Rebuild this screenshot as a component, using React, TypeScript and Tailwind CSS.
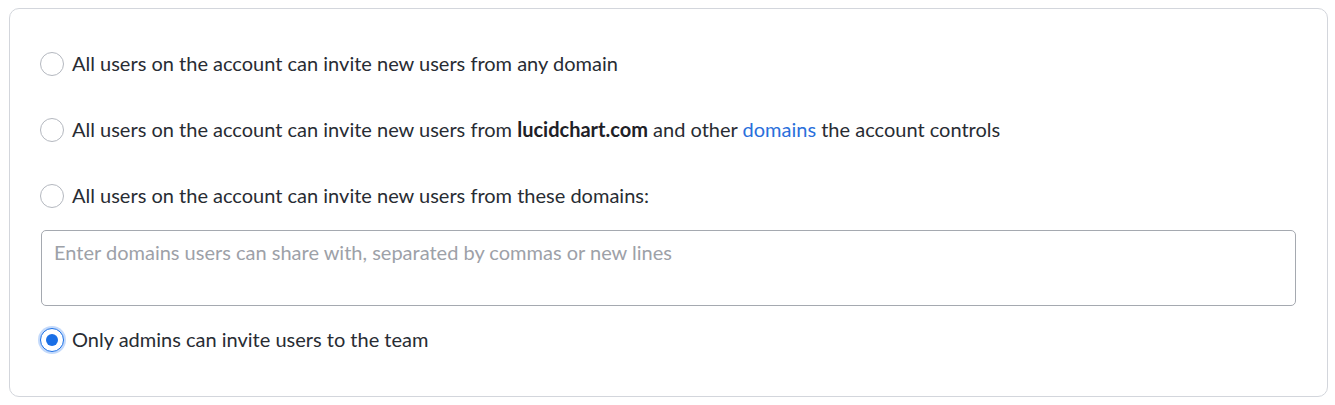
import { ReactNode } from "react";

const font = "Lato, 'Noto Sans', sans-serif";

function Radio({ checked }: { checked?: boolean }) {
    if (checked) {
        return (
            <span className="flex items-center justify-center w-[24px] h-[24px] rounded-full border border-[#1a6fe6] bg-white ring-2 ring-[#c4dafb] shrink-0">
                <span className="w-[12px] h-[12px] rounded-full bg-[#1a6fe6]" />
            </span>
        );
    }
    return <span className="w-[24px] h-[24px] rounded-full border border-[#b4b8bf] bg-white shrink-0" />;
}

function Option({ checked, children }: { checked?: boolean; children: ReactNode }) {
    return (
        <label className="flex items-center gap-[8px] h-[24px] ml-[-1px] text-[20px] text-[#282c33] leading-none">
            <Radio checked={checked} />
            <span className="pb-[2px]">{children}</span>
        </label>
    );
}

export default function App() {
    return (
        <div className="bg-white w-[1335px] h-[405px] pt-[8px] pl-[9px]" style={{ fontFamily: font }}>
            <div className="w-[1319px] h-[389px] border border-[#d3d6dc] rounded-[10px] px-[31px] pt-[43px] flex flex-col">
                <Option>All users on the account can invite new users from any domain</Option>
                <div className="h-[42px]" />
                <Option>
                    All users on the account can invite new users from <b className="font-bold text-[#1e2127]">lucidchart.com</b> and other{" "}
                    <a className="text-[#2a6fdb]">domains</a> the account controls
                </Option>
                <div className="h-[42px]" />
                <Option>All users on the account can invite new users from these domains:</Option>
                <textarea
                    className="mt-[22px] w-full h-[76px] border border-[#a5a9b0] rounded-[5px] px-[12px] pt-[9px] pb-[10px] text-[20px] leading-[24px] resize-none outline-none placeholder:text-[#9da1a8]"
                    style={{ fontFamily: font }}
                    placeholder="Enter domains users can share with, separated by commas or new lines"
                />
                <div className="h-[22px]" />
                <Option checked>Only admins can invite users to the team</Option>
            </div>
        </div>
    );
}
